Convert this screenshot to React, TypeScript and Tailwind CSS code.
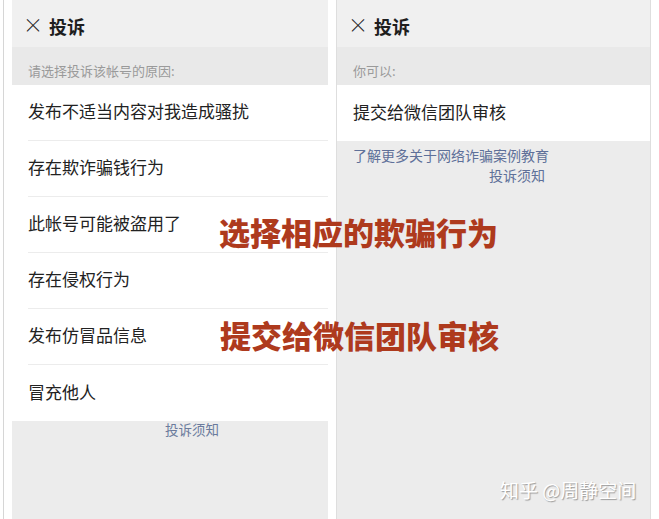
import React from "react";

const FONT = { fontFamily: '"Noto Sans CJK SC", "Noto Sans", sans-serif' };

const reasons = [
  "发布不适当内容对我造成骚扰",
  "存在欺诈骗钱行为",
  "此帐号可能被盗用了",
  "存在侵权行为",
  "发布仿冒品信息",
  "冒充他人",
];

function Header() {
  return (
    <div className="h-[47px] bg-[#f0f0f0] flex items-end pb-[12px]">
      <span className="text-[20px] leading-none text-[#222] font-light ml-[11px] w-[26px]">×</span>
      <span className="text-[18px] leading-none font-semibold text-[#1e1e1e]">投诉</span>
    </div>
  );
}

function Label({ children }: { children: React.ReactNode }) {
  return (
    <div className="h-[38px] bg-[#e9e9e9] flex items-end pb-[8px] pl-[16px]">
      <span className="text-[13px] leading-none text-[#9a9a9a]">{children}</span>
    </div>
  );
}

export default function App() {
  return (
    <div className="relative w-[659px] h-[519px] bg-white flex overflow-hidden" style={FONT}>
      {/* edge of the previous screen */}
      <div className="w-[4px] border-r border-[#d6d6d6] shrink-0" />
      <div className="w-[8px] shrink-0" />

      {/* reason list */}
      <div className="w-[316px] shrink-0 flex flex-col">
        <Header />
        <Label>请选择投诉该帐号的原因:</Label>
        <div className="bg-white">
          {reasons.map((r, i) => (
            <div key={r} className="pl-[16px]">
              <div
                className={
                  "h-[56px] flex items-center pb-[4px] " +
                  (i < reasons.length - 1 ? "border-b border-[#ececec]" : "")
                }
              >
                <span className="text-[17px] leading-none text-[#222]">{r}</span>
              </div>
            </div>
          ))}
        </div>
        <div className="flex-1 bg-[#ececec] pt-[2px] pl-[153px]">
          <span className="block text-[13.5px] leading-none text-[#6b7b9c]">投诉须知</span>
        </div>
      </div>

      <div className="w-[8px] shrink-0" />

      {/* submit options */}
      <div className="w-[315px] shrink-0 flex flex-col border-l border-r border-[#dedede]">
        <Header />
        <Label>你可以:</Label>
        <div className="h-[56px] bg-white flex items-center pl-[16px] pb-[4px]">
          <span className="text-[17px] leading-none text-[#222]">提交给微信团队审核</span>
        </div>
        <div className="flex-1 bg-[#ececec] pt-[4px] pl-[16px] flex flex-col">
          <span className="text-[14px] leading-[20px] text-[#5e7099]">了解更多关于网络诈骗案例教育</span>
          <span className="text-[14px] leading-[20px] text-[#5e7099] pl-[136px]">投诉须知</span>
        </div>
      </div>

      {/* captions laid over both screens */}
      <div className="absolute left-[219px] top-[216px] text-[31px] leading-none font-black text-[#ae3a1d]">
        选择相应的欺骗行为
      </div>
      <div className="absolute left-[220px] top-[319px] text-[31px] leading-none font-black text-[#ae3a1d]">
        提交给微信团队审核
      </div>

      {/* watermark */}
      <div
        className="absolute left-[500px] top-[480px] text-[19px] leading-none text-white"
        style={{ textShadow: "1px 1px 1px rgba(0,0,0,0.35)" }}
      >
        知乎 @周静空间
      </div>
    </div>
  );
}
